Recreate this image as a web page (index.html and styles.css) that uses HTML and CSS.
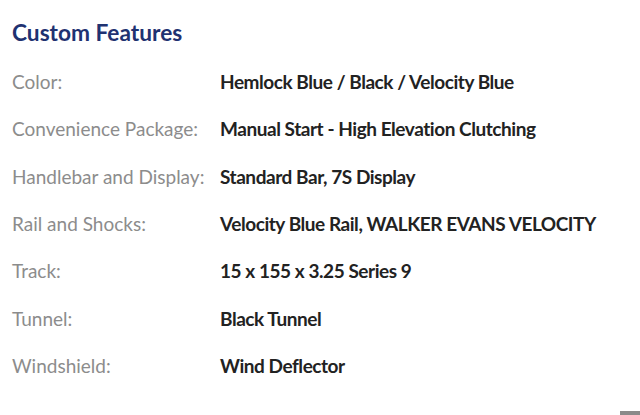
FILE: index.html
```html
<!DOCTYPE html>
<html>
<head>
<meta charset="utf-8">
<link rel="stylesheet" href="styles.css">
</head>
<body>
<section class="features">
  <h2 class="title">Custom Features</h2>
  <dl class="specs">
    <dt>Color:</dt><dd>Hemlock Blue / Black / Velocity Blue</dd>
    <dt>Convenience Package:</dt><dd>Manual Start - High Elevation Clutching</dd>
    <dt>Handlebar and Display:</dt><dd>Standard Bar, 7S Display</dd>
    <dt>Rail and Shocks:</dt><dd>Velocity Blue Rail, WALKER EVANS VELOCITY</dd>
    <dt>Track:</dt><dd>15 x 155 x 3.25 Series 9</dd>
    <dt>Tunnel:</dt><dd>Black Tunnel</dd>
    <dt>Windshield:</dt><dd>Wind Deflector</dd>
  </dl>
  <div class="footer"><span class="tab"></span></div>
</section>
</body>
</html>
```
FILE: styles.css
```css
html, body {
  margin: 0;
  padding: 0;
  background: #ffffff;
}
body {
  width: 640px;
  height: 415px;
  overflow: hidden;
}
.features {
  padding: 0 0 0 12px;
}
.title {
  margin: 0;
  padding-top: 19px;
  height: 28px;
  line-height: 28px;
  font-family: "Lato", "Liberation Sans", sans-serif;
  font-weight: 700;
  font-size: 22.7px;
  color: #1f3271;
}
.specs {
  margin: 11px 0 0 0;
  display: grid;
  grid-template-columns: 208px 1fr;
  grid-auto-rows: 47.3px;
  align-items: center;
}
.specs dt {
  font-family: "Lato", "Liberation Sans", sans-serif;
  font-size: 19px;
  color: #8c8c8c;
}
.specs dd {
  margin: 0;
  font-family: "Lato", "Liberation Sans", sans-serif;
  font-weight: 700;
  font-size: 19px;
  color: #222222;
  letter-spacing: -0.45px;
}
.footer {
  display: flex;
  justify-content: flex-end;
  margin-top: 22px;
}
.tab {
  display: block;
  width: 20px;
  height: 10px;
  background: #8a8a8a;
}
```
